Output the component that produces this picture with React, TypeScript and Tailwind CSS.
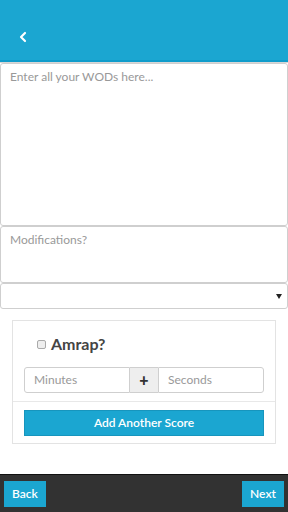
import { ChevronLeft } from "lucide-react";

export default function App() {
  return (
    <div
      className="w-[288px] h-[512px] bg-white flex flex-col overflow-hidden text-[#555]"
      style={{ fontFamily: 'Lato, "Open Sans", "Liberation Sans", sans-serif' }}
    >
      {/* header */}
      <div className="h-[62px] shrink-0 bg-[#1ba6d1] border-b-2 border-b-[#0f9ccb] flex items-center pl-[15px] pt-[14px]">
        <ChevronLeft className="w-[16px] h-[16px] text-white" strokeWidth={3.2} />
      </div>
      <div className="h-[1px] bg-[#d6d6d6]" />

      {/* form */}
      <div className="flex flex-col">
        <div className="h-[163px] border border-[#cfcfcf] rounded-[3px] px-[9px] pt-[4px] text-[12px] text-[#999]">
          Enter all your WODs here...
        </div>
        <div className="h-[57px] border border-[#cfcfcf] rounded-[3px] px-[9px] pt-[4px] text-[12px] text-[#999]">
          Modifications?
        </div>
        <div className="h-[26px] border border-[#cfcfcf] rounded-[3px] flex items-center justify-end pr-[5px]">
          <svg width="6" height="5" viewBox="0 0 6 5">
            <path d="M0 0 L6 0 L3 5 Z" fill="#222" />
          </svg>
        </div>
      </div>

      {/* score card */}
      <div className="mx-[12px] mt-[11px] border border-[#e3e3e3] flex flex-col">
        <div className="px-[11px] pt-[11px] pb-[8px] border-b border-[#e8e8e8]">
          <div className="flex items-center gap-[5px] pl-[13px]">
            <span className="w-[9px] h-[9px] border border-[#aaa] bg-[#eee] rounded-[2px]" />
            <span className="text-[16px] font-bold text-[#444]">Amrap?</span>
          </div>
          <div className="flex mt-[11px] h-[26px]">
            <div className="flex-1 border border-[#cfcfcf] rounded-l-[3px] flex items-center px-[9px] text-[12px] text-[#999]">
              Minutes
            </div>
            <div className="w-[28px] bg-[#eee] border-y border-[#cfcfcf] flex items-center justify-center text-[16px] font-black text-[#333]">
              +
            </div>
            <div className="flex-1 border border-[#cfcfcf] rounded-r-[3px] flex items-center px-[9px] text-[12px] text-[#999]">
              Seconds
            </div>
          </div>
        </div>
        <div className="px-[11px] pt-[7px] pb-[7px]">
          <button className="w-full h-[26px] bg-[#1ba6d1] border border-[#1795bd] text-white text-[12px] font-semibold">
            Add Another Score
          </button>
        </div>
      </div>

      <div className="flex-1" />

      {/* footer */}
      <div className="h-[38px] bg-[#323232] border-t border-[#111] flex items-center justify-between px-[4px]">
        <button className="w-[42px] h-[26px] bg-[#1ba6d1] text-white text-[12px] font-semibold">Back</button>
        <button className="w-[42px] h-[26px] bg-[#1ba6d1] text-white text-[12px] font-semibold">Next</button>
      </div>
    </div>
  );
}
